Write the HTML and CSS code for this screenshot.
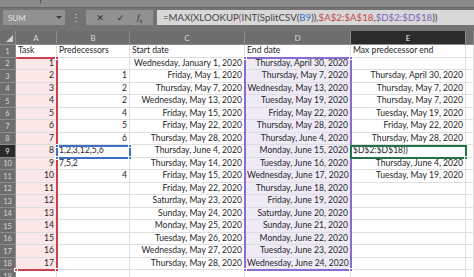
FILE: index.html
```html
<!DOCTYPE html>
<html lang="en">

<head>
    <meta charset="UTF-8">
    <title>Max predecessor end</title>
    <link rel="stylesheet" href="styles.css">
</head>

<body>
    <div class="titleStrip"><span class="tick"></span></div>
    <div class="formulaBar">
        <div class="nameBox"><span>SUM</span><span class="drop"></span></div>
        <div class="dots">&#8942;</div>
        <div class="fxButtons">
            <span class="fxBtn">&#10005;</span>
            <span class="fxBtn">&#10003;</span>
            <span class="fxBtn fx"><i>f</i><sub>x</sub></span>
        </div>
        <div class="formula">=MAX(XLOOKUP<span class="paren">(</span>INT(SplitCSV(<span class="refBlue">B9</span>)),<span class="refRed">$A$2:$A$18</span>,<span class="refPurple">$D$2:$D$18</span>))</div>
    </div>

    <div class="sheet" id="sheet">
        <div class="corner"><span class="tri"></span></div>
        <div class="colHead">A</div>
        <div class="colHead">B</div>
        <div class="colHead">C</div>
        <div class="colHead">D</div>
        <div class="colHead selected">E</div>
        <div class="colHead"></div>

        <!-- range highlights drawn over the cells -->
        <div class="range rangeA"><i class="h tr"></i><i class="h bl"></i><i class="h br"></i></div>
        <div class="range rangeD"><i class="h tl"></i><i class="h tr"></i><i class="h bl"></i><i class="h br"></i></div>
        <div class="range rangeB9"><i class="h tl"></i><i class="h tr"></i><i class="h bl"></i><i class="h br"></i></div>
        <div class="range activeCell"><i class="h br"></i></div>
    </div>

    <script>
        const rows = [
            ["Task", "Predecessors", "Start date", "End date", "Max predecessor end"],
            ["1", "", "Wednesday, January 1, 2020", "Thursday, April 30, 2020", ""],
            ["2", "1", "Friday, May 1, 2020", "Thursday, May 7, 2020", "Thursday, April 30, 2020"],
            ["3", "2", "Thursday, May 7, 2020", "Wednesday, May 13, 2020", "Thursday, May 7, 2020"],
            ["4", "2", "Wednesday, May 13, 2020", "Tuesday, May 19, 2020", "Thursday, May 7, 2020"],
            ["5", "4", "Friday, May 15, 2020", "Friday, May 22, 2020", "Tuesday, May 19, 2020"],
            ["6", "5", "Friday, May 22, 2020", "Thursday, May 28, 2020", "Friday, May 22, 2020"],
            ["7", "6", "Thursday, May 28, 2020", "Thursday, June 4, 2020", "Thursday, May 28, 2020"],
            ["8", "1,2,3,12,5,6", "Thursday, June 4, 2020", "Monday, June 15, 2020", "$D$2:$D$18))"],
            ["9", "7,5,2", "Thursday, May 14, 2020", "Tuesday, June 16, 2020", "Thursday, June 4, 2020"],
            ["10", "4", "Friday, May 15, 2020", "Wednesday, June 17, 2020", "Tuesday, May 19, 2020"],
            ["11", "", "Friday, May 22, 2020", "Thursday, June 18, 2020", ""],
            ["12", "", "Saturday, May 23, 2020", "Friday, June 19, 2020", ""],
            ["13", "", "Sunday, May 24, 2020", "Saturday, June 20, 2020", ""],
            ["14", "", "Monday, May 25, 2020", "Sunday, June 21, 2020", ""],
            ["15", "", "Tuesday, May 26, 2020", "Monday, June 22, 2020", ""],
            ["16", "", "Wednesday, May 27, 2020", "Tuesday, June 23, 2020", ""],
            ["17", "", "Thursday, May 28, 2020", "Wednesday, June 24, 2020", ""],
            ["", "", "", "", ""]
        ];

        const sheet = document.getElementById("sheet");

        rows.forEach((row, i) => {
            const num = i + 1;
            const head = document.createElement("div");
            head.className = num === 9 ? "rowHead selected" : "rowHead";
            head.textContent = num;
            sheet.appendChild(head);

            row.concat([""]).forEach((val, c) => {
                const cell = document.createElement("div");
                cell.className = "cell";
                // numbers and dates sit on the right, text on the left
                if (num > 1 && (/^\d+$/.test(val) || val.includes(", 20"))) {
                    cell.classList.add("right");
                }
                if (num > 1 && num < 19 && c === 0) cell.classList.add("fillA");
                if (num > 1 && num < 19 && c === 3) cell.classList.add("fillD");
                cell.textContent = val;
                sheet.appendChild(cell);
            });
        });
    </script>
</body>

</html>
```

FILE: styles.css
```css
* {
    margin: 0;
    padding: 0;
    box-sizing: border-box;
}

body {
    width: 474px;
    height: 277px;
    overflow: hidden;
    background-color: #ffffff;
    font-family: Lato, "Liberation Sans", sans-serif;
}

.titleStrip {
    height: 8px;
    background-color: #8b8b8b;
    border-bottom: 1px solid #666666;
    padding-left: 40px;
}

.tick {
    display: block;
    width: 1px;
    height: 3px;
    background-color: #555555;
}

.formulaBar {
    height: 23px;
    background-color: #737373;
    display: flex;
    align-items: flex-start;
    padding: 2px 0 0 3px;
}

.nameBox {
    width: 62px;
    height: 15px;
    background-color: #919191;
    color: #e4e4e4;
    font-size: 8px;
    display: flex;
    align-items: center;
    justify-content: space-between;
    padding: 0 3px 0 5px;
}

.drop {
    width: 0;
    height: 0;
    border-left: 3px solid transparent;
    border-right: 3px solid transparent;
    border-top: 3px solid #3c3c3c;
}

.dots {
    width: 21px;
    height: 15px;
    line-height: 15px;
    text-align: center;
    color: #dddddd;
    font-size: 10px;
}

.fxButtons {
    width: 67px;
    height: 15px;
    background-color: #919191;
    display: flex;
    align-items: center;
    justify-content: space-around;
    padding: 0 4px;
}

.fxBtn {
    color: #2f2f2f;
    font-size: 9px;
    font-family: "DejaVu Sans", sans-serif;
}

.fx {
    font-family: "Liberation Serif", serif;
    font-size: 9px;
}

.fx sub {
    font-size: 6px;
}

.formula {
    flex: 1;
    height: 15px;
    margin-left: 4px;
    background-color: #d8d8d8;
    color: #454545;
    font-size: 9.7px;
    line-height: 15px;
    padding-left: 6px;
    white-space: nowrap;
    overflow: hidden;
}

.paren {
    color: #b0506a;
}

.refBlue {
    color: #3f6bc0;
}

.refRed {
    color: #c24a4a;
}

.refPurple {
    color: #8466b8;
}

.sheet {
    position: relative;
    display: grid;
    grid-template-columns: 16px 41px 73px 115px 106px 115px 1fr;
    grid-template-rows: 14.25px repeat(19, 12.5px);
    font-size: 8.6px;
    color: #262626;
}

.corner,
.colHead,
.rowHead {
    background-color: #6e6e6e;
    color: #d6d6d6;
    font-size: 8px;
    border-right: 1px solid #8c8c8c;
    border-bottom: 1px solid #8c8c8c;
    display: flex;
    align-items: center;
    justify-content: center;
}

.corner {
    justify-content: flex-end;
    align-items: flex-end;
    padding: 0 2px 2px 0;
}

.tri {
    width: 0;
    height: 0;
    border-left: 7px solid transparent;
    border-bottom: 7px solid #d0d0d0;
}

.rowHead {
    font-size: 7.5px;
    overflow: hidden;
}

.selected {
    background-color: #2b2b2b;
    color: #e8e8e8;
}

.cell {
    border-right: 1px solid #dedede;
    border-bottom: 1px solid #dedede;
    padding: 0 2px;
    line-height: 11.5px;
    white-space: nowrap;
    overflow: hidden;
}

.right {
    text-align: right;
}

.fillA {
    background-color: #fbe7e8;
}

.fillD {
    background-color: #eeebf6;
}

.range {
    position: absolute;
    border: 2px solid;
    z-index: 2;
}

.rangeA {
    left: 15px;
    top: 25.5px;
    width: 43px;
    height: 214.5px;
    border-color: #c8414f;
    border-left-color: transparent;
}

.rangeD {
    left: 244px;
    top: 25.5px;
    width: 108px;
    height: 214.5px;
    border-color: #8a6ccf;
}

.rangeB9 {
    left: 56px;
    top: 113.5px;
    width: 75px;
    height: 14px;
    border-color: #3a6fc4;
}

.activeCell {
    left: 350px;
    top: 113.5px;
    width: 117px;
    height: 14px;
    border-color: #217346;
}

.h {
    position: absolute;
    width: 4px;
    height: 4px;
    background-color: inherit;
    border: 1px solid #ffffff;
}

.rangeA .h {
    background-color: #c8414f;
}

.rangeD .h {
    background-color: #8a6ccf;
}

.rangeB9 .h {
    background-color: #3a6fc4;
}

.activeCell .h {
    background-color: #217346;
}

.tl {
    left: -3px;
    top: -3px;
}

.tr {
    right: -3px;
    top: -3px;
}

.bl {
    left: -3px;
    bottom: -3px;
}

.br {
    right: -3px;
    bottom: -3px;
}
```
